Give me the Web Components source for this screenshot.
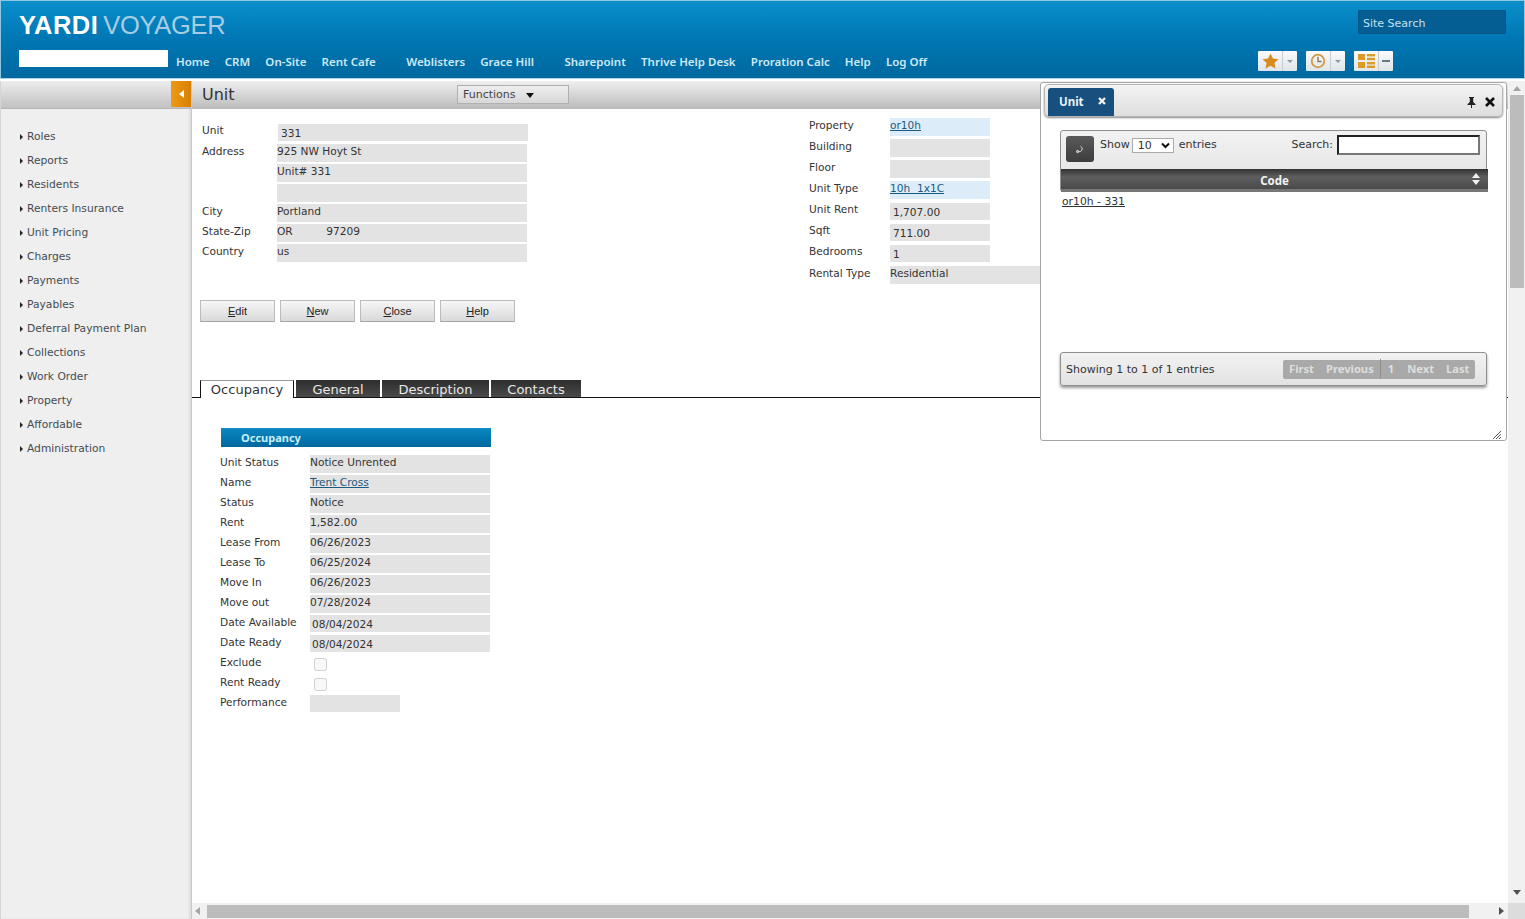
<!DOCTYPE html>
<html lang="en">
<head>
<meta charset="utf-8">
<title>Unit</title>
<style>
html, body { margin: 0; height: 919px; overflow: hidden; background: #fff; }
body { font: 11px "DejaVu Sans", sans-serif; color: #333; }
</style>
</head>
<body>
<voyager-shell>
  <voyager-header slot="header"></voyager-header>
  <side-nav slot="nav"></side-nav>
  <unit-page slot="main"></unit-page>
  <lookup-panel slot="over"></lookup-panel>
</voyager-shell>

<script>
// shell: header, nav + content, fake browser scrollbars
class VoyagerShell extends HTMLElement {
  constructor() {
    super();
    this.attachShadow({ mode: 'open' });
    this.shadowRoot.innerHTML = `
<style>
:host { display: grid; position: relative; width: 1525px; height: 919px; overflow: hidden;
  grid-template-columns: 192px 1316px 17px; grid-template-rows: 81px 822px 16px; }
.head { grid-column: 1 / 4; }
.nav { grid-row: 2 / 4; }
.main { overflow: hidden; }
.v { background: #f1f1f1; display: flex; flex-direction: column; align-items: center; }
.v i { display: block; width: 0; height: 0; border: 4px solid transparent; }
.v .up { border-top: 0; border-bottom: 5px solid #a5a5a5; margin-top: 5px; }
.v .thumb { width: 14px; height: 193px; background: #bcbcbc; margin-top: 4px; }
.v .dn { border-bottom: 0; border-top: 5px solid #505050; margin-top: auto; margin-bottom: 8px; }
.h { background: #f1f1f1; display: flex; align-items: center; }
.h i { display: block; width: 0; height: 0; border: 4px solid transparent; }
.h .lf { border-left: 0; border-right: 5px solid #a5a5a5; margin-left: 3px; }
.h .thumb { height: 13px; width: 1262px; background: #bcbcbc; margin-left: 7px; }
.h .rt { border-right: 0; border-left: 5px solid #505050; margin-left: auto; margin-right: 4px; }
.corner { background: #dcdcdc; }
</style>
<div class="head"><slot name="header"></slot></div>
<div class="nav"><slot name="nav"></slot></div>
<div class="main"><slot name="main"></slot></div>
<div class="v"><i class="up"></i><div class="thumb"></div><i class="dn"></i></div>
<div class="h"><i class="lf"></i><div class="thumb"></div><i class="rt"></i></div>
<div class="corner"></div>
<slot name="over"></slot>`;
  }
}

class VoyagerHeader extends HTMLElement {
  constructor() {
    super();
    this.attachShadow({ mode: 'open' });
    const links = ['Home', 'CRM', 'On-Site', 'Rent Cafe', '', 'Weblisters', 'Grace Hill', '', 'Sharepoint',
      'Thrive Help Desk', 'Proration Calc', 'Help', 'Log Off'];
    this.shadowRoot.innerHTML = `
<style>
:host { display: block; height: 79px; box-sizing: border-box; position: relative;
  border: 1px solid #8fc7e0; border-bottom-color: #a9d6ea;
  background: linear-gradient(#0a8fcb, #0079b6 45%, #00689f); }
.top { display: flex; justify-content: space-between; height: 48px; padding: 9px 18px 0 18px; box-sizing: border-box; }
.logo { font: 25.5px/30px "Liberation Sans", sans-serif; letter-spacing: -.3px; color: #a6cde2; white-space: nowrap; }
.logo b { color: #fff; margin-right: 5px; letter-spacing: .45px; }
.site { width: 148px; height: 24px; box-sizing: border-box; background: #045e93; border: 1px solid #03568a; color: #c4e2f1;
  font-size: 11px; line-height: 25px; padding-left: 4px; border-radius: 1px; }
.bottom { display: flex; align-items: center; padding-left: 18px; height: 24px; margin-top: 1px; }
.user { width: 149px; height: 17px; background: #fff; margin-right: 8px; align-self: flex-start; }
nav { display: flex; gap: 15.2px; font: 600 11.5px "Noto Sans", sans-serif; color: #cfe9f6; margin-top: -1px; }
nav span:empty { width: 0; }
.tools { margin-left: auto; display: flex; gap: 9px; margin-right: 131px; margin-top: 1px; align-self: flex-start; }
.tool { display: flex; width: 39px; height: 20px; background: linear-gradient(#fafafa, #dfe5e9); border-radius: 1px; }
.tool > div { display: flex; align-items: center; justify-content: center; }
.tool .a { width: 24px; border-right: 1px solid #c5ced4; }
.tool .b { flex: 1; }
.tri { width: 0; height: 0; border: 3px solid transparent; border-top: 3px solid #8a99a6; border-bottom: 0; }
.dash { width: 8px; height: 2px; background: #65788a; }
</style>
<div class="top">
  <div class="logo"><b>YARDI</b>VOYAGER</div>
  <div class="site">Site Search</div>
</div>
<div class="bottom">
  <div class="user"></div>
  <nav>${links.map(l => `<span>${l}</span>`).join('')}</nav>
  <div class="tools">
    <div class="tool"><div class="a"><svg width="17" height="16" viewBox="0 0 17 16"><path fill="#d98a1c" d="M8.5.5l2.4 5.1 5.6.7-4.1 3.8 1.1 5.5-5-2.8-5 2.8 1.1-5.5L.5 6.3l5.6-.7z"/></svg></div><div class="b"><span class="tri"></span></div></div>
    <div class="tool"><div class="a"><svg width="16" height="16" viewBox="0 0 16 16" fill="none" stroke="#d29a45" stroke-width="1.8"><circle cx="8" cy="8" r="6.3"/><path d="M8 3.8V8.5h3.6" stroke="#8a7a5a" stroke-width="1.4"/></svg></div><div class="b"><span class="tri"></span></div></div>
    <div class="tool"><div class="a"><svg width="17" height="14" viewBox="0 0 17 14" fill="#dd9a25"><rect x="0" y="0" width="7" height="6"/><rect x="0" y="8" width="7" height="6"/><rect x="9" y="0" width="8" height="2.4"/><rect x="9" y="3.8" width="8" height="2.4"/><rect x="9" y="8" width="8" height="2.4"/><rect x="9" y="11.6" width="8" height="2.4"/></svg></div><div class="b"><span class="dash"></span></div></div>
  </div>
</div>`;
  }
}

class SideNav extends HTMLElement {
  constructor() {
    super();
    this.attachShadow({ mode: 'open' });
    const items = ['Roles', 'Reports', 'Residents', 'Renters Insurance', 'Unit Pricing', 'Charges', 'Payments', 'Payables',
      'Deferral Payment Plan', 'Collections', 'Work Order', 'Property', 'Affordable', 'Administration'];
    this.shadowRoot.innerHTML = `
<style>
:host { display: block; height: 838px; background: #efefef; box-sizing: border-box; border-left: 1px solid #d5d5d5;
  border-right: 1px solid #c8c8c8; box-shadow: inset -2px 0 2px #ddd; }
.cap { height: 27px; background: linear-gradient(#ececec, #c2c2c2); border-bottom: 1px solid #b5b5b5; display: flex; justify-content: flex-end; }
.toggle { width: 20px; height: 26px; background: linear-gradient(90deg, #ef9a12, #d77f05); display: flex; align-items: center; justify-content: center; }
.toggle i { width: 0; height: 0; border: 4px solid transparent; border-left: 0; border-right: 5px solid #fff; }
ul { list-style: none; margin: 0; padding: 16px 0 0 19px; }
li { height: 24px; line-height: 24px; color: #444c52; display: flex; align-items: center; gap: 4px; font-size: 10.7px; white-space: nowrap; }
li::before { content: ""; width: 0; height: 0; border: 3.5px solid transparent; border-left: 3px solid #222; border-right: 0; }
</style>
<div class="cap"><div class="toggle"><i></i></div></div>
<ul>${items.map(i => `<li>${i}</li>`).join('')}</ul>`;
  }
}

// label + grey value box
class FormRow extends HTMLElement {
  constructor() {
    super();
    this.attachShadow({ mode: 'open' });
    this.shadowRoot.innerHTML = `
<style>
:host { display: flex; height: var(--row-h, 20px); font-size: 10.6px; white-space: nowrap; color: #333; }
.lab { width: var(--lab-w, 75px); flex: none; line-height: var(--lab-lh, 14px); margin-top: var(--lab-top, 0); }
.val { width: var(--val-w, 250px); height: 18px; line-height: var(--val-lh, 14px); background: #e3e3e3; box-sizing: border-box; overflow: hidden; flex: none; }
:host([link]) .val { background: #dcedf9; color: #1d5a80; }
:host([link="grey"]) .val { background: #e3e3e3; }
:host([link]) .txt { text-decoration: underline; }
:host([input]) .val { height: 17px; line-height: 18px; margin-top: var(--in-top, 0px); margin-left: var(--in-left, 0px); padding-left: var(--in-pad, 3px); }
:host([wide]) .val { width: 250px; }
:host([short]) .val { width: 90px; height: 17px; }
:host([check]) .val { background: none; padding: 3px 0 0 4px; }
input { margin: 0; width: 13px; height: 13px; display: block; }
</style>
<div class="lab"></div>
<div class="val"><span class="txt"><slot></slot></span></div>`;
    this.shadowRoot.querySelector('.lab').textContent = this.getAttribute('label');
    if (this.hasAttribute('check')) {
      this.shadowRoot.querySelector('.val').innerHTML = '<input type="checkbox" disabled>';
    }
  }
}

class ActionButton extends HTMLElement {
  constructor() {
    super();
    this.attachShadow({ mode: 'open' });
    this.shadowRoot.innerHTML = `
<style>
:host { display: block; width: 75px; height: 22px; box-sizing: border-box; border: 1px solid #bbb; border-bottom-color: #a8a8a8;
  background: linear-gradient(#f6f6f6, #d9d9d9); text-align: center; font: 11px/20px "Liberation Sans", sans-serif; color: #222; }
</style><slot></slot>`;
  }
}

class TabStrip extends HTMLElement {
  constructor() {
    super();
    this.attachShadow({ mode: 'open' });
    const tabs = [['Occupancy', 94], ['General', 84], ['Description', 107], ['Contacts', 90]];
    this.shadowRoot.innerHTML = `
<style>
:host { display: flex; gap: 2px; height: 17px; border-bottom: 1px solid #111; padding-left: 8px; font-size: 13px; }
div { box-sizing: border-box; height: 17px; background: linear-gradient(#2d2d2d, #4a4a4a); color: #e8e8e8; text-align: center; line-height: 20px; }
.on { background: #fff; color: #333; height: 18px; border: 1px solid #999; border-right-color: #111; border-bottom: 0; border-left-color: #111; line-height: 18px; letter-spacing: .05px; }
</style>
${tabs.map((t, i) => `<div class="${i ? '' : 'on'}" style="width:${t[1]}px">${t[0]}</div>`).join('')}`;
  }
}

class UnitPage extends HTMLElement {
  constructor() {
    super();
    this.attachShadow({ mode: 'open' });
    this.shadowRoot.innerHTML = `
<style>
:host { display: block; }
.bar { height: 27px; background: linear-gradient(#efefef, #bdbdbd); display: flex; align-items: center; padding-left: 10px; font-size: 16px; color: #333; border-bottom: 1px solid #bbb; }
.bar .title { width: 255px; }
.fn { width: 112px; height: 19px; box-sizing: border-box; border: 1px solid #b0b0b0; font-size: 11px; line-height: 18px; padding-left: 5px; display: flex; gap: 10px; align-items: center; background: linear-gradient(#eee, #d8d8d8); color: #444; }
.fn i { width: 0; height: 0; border: 4.5px solid transparent; border-top: 5px solid #111; border-bottom: 0; margin-top: 1px; }
.forms { display: flex; height: 191px; }
.left { margin: 13px 0 0 10px; width: 607px; --val-lh: 15px; --lab-lh: 14px; --lab-w: 75px; }
.left form-row:first-child { height: 22px; --lab-top: 1px; --in-top: 2px; --in-left: 1px; }
.right { margin-top: 9px; --row-h: 21px; --lab-w: 81px; --val-w: 100px; --in-top: 1px; --in-pad: 3px; }
.right form-row:nth-child(7) { height: 22px; }
.btns { display: flex; gap: 5px; padding-left: 8px; margin-bottom: 58px; }
.sec { margin: 30px 0 0 28px; --lab-w: 90px; --val-w: 180px; --in-pad: 2px; }
.sec h3 { margin: 0 0 8px 1px; width: 270px; height: 19px; background: linear-gradient(#0a86c0, #00679e); border-top: 1px solid #1a8ec8; box-sizing: border-box;
  color: #c9effb; font: 700 11px/18px "Noto Sans", sans-serif; padding-left: 20px; }
</style>
<div class="bar"><div class="title">Unit</div><div class="fn">Functions <i></i></div></div>
<div class="forms">
  <div class="left">
    <form-row label="Unit" input>331</form-row>
    <form-row label="Address">925 NW Hoyt St</form-row>
    <form-row label="">Unit# 331</form-row>
    <form-row label=""></form-row>
    <form-row label="City">Portland</form-row>
    <form-row label="State-Zip">OR &nbsp; &nbsp; &nbsp; &nbsp; &nbsp;97209</form-row>
    <form-row label="Country">us</form-row>
  </div>
  <div class="right">
    <form-row label="Property" link>or10h</form-row>
    <form-row label="Building"></form-row>
    <form-row label="Floor"></form-row>
    <form-row label="Unit Type" link>10h&nbsp; 1x1C</form-row>
    <form-row label="Unit Rent" input>1,707.00</form-row>
    <form-row label="Sqft" input>711.00</form-row>
    <form-row label="Bedrooms" input>1</form-row>
    <form-row label="Rental Type" wide>Residential</form-row>
  </div>
</div>
<div class="btns">
  <action-button><u>E</u>dit</action-button>
  <action-button><u>N</u>ew</action-button>
  <action-button><u>C</u>lose</action-button>
  <action-button><u>H</u>elp</action-button>
</div>
<tab-strip></tab-strip>
<div class="sec">
  <h3>Occupancy</h3>
  <form-row label="Unit Status">Notice Unrented</form-row>
  <form-row label="Name" link="grey">Trent Cross</form-row>
  <form-row label="Status">Notice</form-row>
  <form-row label="Rent">1,582.00</form-row>
  <form-row label="Lease From">06/26/2023</form-row>
  <form-row label="Lease To">06/25/2024</form-row>
  <form-row label="Move In">06/26/2023</form-row>
  <form-row label="Move out">07/28/2024</form-row>
  <form-row label="Date Available" input>08/04/2024</form-row>
  <form-row label="Date Ready" input>08/04/2024</form-row>
  <form-row label="Exclude" check></form-row>
  <form-row label="Rent Ready" check></form-row>
  <form-row label="Performance" short></form-row>
</div>`;
  }
}

// floating lookup window on top of the page
class LookupPanel extends HTMLElement {
  constructor() {
    super();
    this.attachShadow({ mode: 'open' });
    this.shadowRoot.innerHTML = `
<style>
:host { position: absolute; left: 1040px; top: 82px; width: 467px; height: 359px; box-sizing: border-box; background: #fff; border: 1px solid #a5a5a5; border-radius: 3px; font-size: 11px; color: #333; }
.titlebar { margin: 1px 3px 0 3px; height: 33px; box-sizing: border-box; background: linear-gradient(#f4f4f4, #dedede); border: 1px solid #b5b5b5; border-radius: 5px; box-shadow: 0 1px 2px #888; display: flex; align-items: flex-end; padding: 0 7px 0 3px; }
.tab { width: 66px; height: 28px; background: #174f7f; border-radius: 3px 3px 0 0; color: #eef4f8; font: 700 11.5px "Noto Sans", sans-serif; padding: 0 0 2px 11px; box-sizing: border-box; display: flex; gap: 14px; align-items: center; }
.acts { margin-left: auto; display: flex; gap: 9px; align-items: center; height: 28px; }
.box { margin: 13px 19px 0 19px; border: 1px solid #8f8f8f; border-radius: 3px; background: linear-gradient(#f2f2f2, #e2e2e2); }
.tools { height: 38px; display: flex; padding-left: 5px; position: relative; }
.refresh { width: 28px; height: 26px; margin-top: 5px; background: linear-gradient(#5a5a5a, #3d3d3d); border-radius: 3px; display: flex; align-items: center; justify-content: center; }
.show { margin: 6px 0 0 6px; line-height: 16px; display: flex; gap: 3px; align-items: flex-start; }
.sel { width: 42px; height: 15px; box-sizing: border-box; border: 1px solid #aaa; background: #fff; margin: 1px 2px 0 -1px; padding-left: 5px; line-height: 13px; position: relative; color: #333; }
.sel svg { position: absolute; right: 3px; top: 3px; }
.srch { margin: 6px 0 0 auto; line-height: 16px; padding-right: 6px; display: flex; gap: 4px; }
.inp { width: 143px; height: 20px; box-sizing: border-box; border: 2px solid #222; border-right-color: #777; border-bottom-color: #777; background: #fff; margin-top: -2px; }
.thead { height: 23px; margin: 0 -2px -1px 0; box-sizing: border-box; background: linear-gradient(#333, #5e5e5e 40%, #4a4a4a); border-bottom: 3px solid #777; color: #f2f2f2; font: 700 11.5px/23px "Noto Sans", sans-serif; text-align: center; position: relative; }
.thead svg { position: absolute; right: 8px; top: 4px; }
.row { margin: 2px 0 0 21px; height: 158px; color: #333; text-decoration: underline; line-height: 16px; font-size: 10.8px; }
.foot { height: 32px; display: flex; align-items: center; justify-content: space-between; padding: 0 11px 0 5px; box-shadow: 0 2px 3px #999; font-size: 11px; }
.pager { height: 19px; width: 192px; background: #a9a9a9; border-radius: 2px; display: flex; align-items: center; color: #dedede; font: 700 11.2px "Noto Sans", sans-serif; box-sizing: border-box; padding: 0 0 1px 6px; }
.pager span:nth-child(2) { margin-left: 12px; padding-right: 6px; border-right: 1px solid #8e8e8e; line-height: 19px; }
.pager span:nth-child(3) { margin-left: 7px; }
.pager span:nth-child(4) { margin-left: 13px; }
.pager span:nth-child(5) { margin-left: 12px; }
.grip { position: absolute; right: 5px; bottom: 1px; }
</style>
<div class="titlebar">
  <div class="tab">Unit <svg width="8" height="8" viewBox="0 0 8 8"><path d="M1 1l6 6M7 1L1 7" stroke="#f0f0f0" stroke-width="2.4"/></svg></div>
  <div class="acts">
    <svg width="9" height="11" viewBox="0 0 9 11" fill="#222"><path d="M2 0h5v1H6.2v4L8.5 7.2V8H5v3H4V8H.5v-.8L2.8 5V1H2z"/></svg>
    <svg width="10" height="10" viewBox="0 0 10 10"><path d="M1 1l8 8M9 1L1 9" stroke="#111" stroke-width="2.6"/></svg>
  </div>
</div>
<div class="box">
  <div class="tools">
    <div class="refresh"><svg width="10" height="10" viewBox="0 0 10 10" fill="none" stroke="#ddd" stroke-width="1"><path d="M5.5 2.2A2.7 2.7 0 1 1 3 7.5M1 7.5l2 -1.5v3z"/></svg></div>
    <div class="show">Show <span class="sel">10<svg width="9" height="7" viewBox="0 0 9 7" fill="none" stroke="#111" stroke-width="2"><path d="M1 1.5l3.5 3.5L8 1.5"/></svg></span> entries</div>
    <div class="srch">Search: <div class="inp"></div></div>
  </div>
  <div class="thead">Code<svg width="8" height="12" viewBox="0 0 8 12" fill="#f0f0f0"><path d="M4 0l4 5H0zM0 7h8l-4 5z"/></svg></div>
</div>
<div class="row">or10h - 331</div>
<div class="box foot" style="margin-top:0">
  <span>Showing 1 to 1 of 1 entries</span>
  <div class="pager"><span>First</span><span>Previous</span><span>1</span><span>Next</span><span>Last</span></div>
</div>
<svg class="grip" width="8" height="8" viewBox="0 0 8 8" stroke="#555" stroke-width="1"><path d="M0 8L8 0M3 8L8 3M6 8L8 6"/></svg>`;
  }
}

customElements.define('voyager-shell', VoyagerShell);
customElements.define('voyager-header', VoyagerHeader);
customElements.define('side-nav', SideNav);
customElements.define('form-row', FormRow);
customElements.define('action-button', ActionButton);
customElements.define('tab-strip', TabStrip);
customElements.define('unit-page', UnitPage);
customElements.define('lookup-panel', LookupPanel);
</script>
</body>
</html>
